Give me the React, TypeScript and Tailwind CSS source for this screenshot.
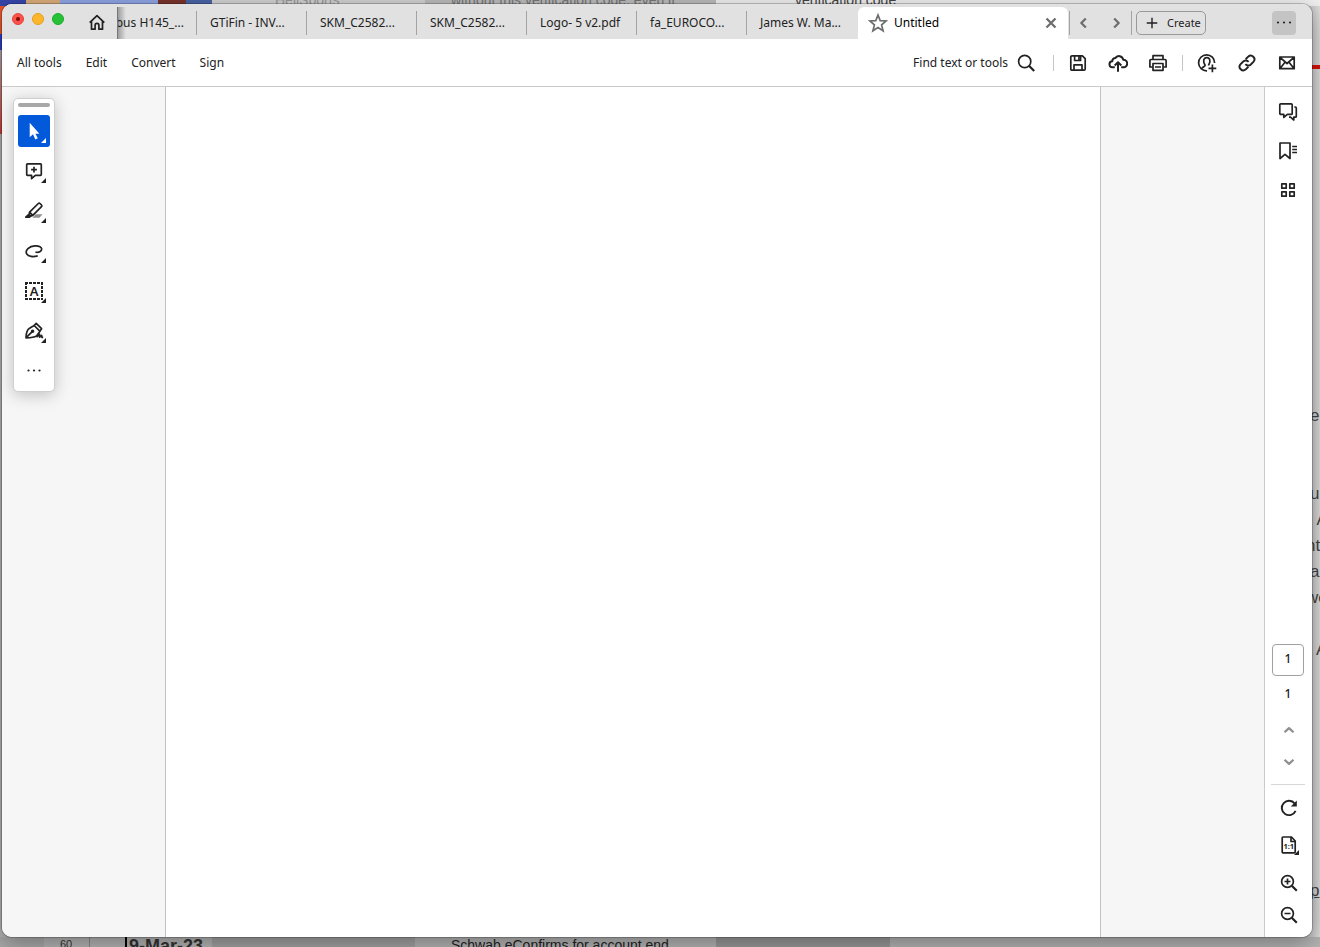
import type { ReactNode } from "react";

interface IconProps {
  children: ReactNode;
  size?: string;
}

function Icon({ children, size = "w-5 h-5" }: IconProps) {
  return (
    <svg
      className={`${size} shrink-0`}
      viewBox="0 0 20 20"
      fill="none"
      stroke="currentColor"
      strokeWidth="1.7"
      strokeLinejoin="round"
      aria-hidden="true"
    >
      {children}
    </svg>
  );
}

interface IconButtonProps {
  label: string;
  className?: string;
  children: ReactNode;
}

function IconButton({ label, className = "", children }: IconButtonProps) {
  return (
    <button
      type="button"
      aria-label={label}
      className={`flex items-center justify-center shrink-0 ${className}`}
    >
      {children}
    </button>
  );
}

const tabs = [
  "GTiFin - INV...",
  "SKM_C2582...",
  "SKM_C2582...",
  "Logo- 5 v2.pdf",
  "fa_EUROCO...",
  "James W. Ma...",
];

const menus = ["All tools", "Edit", "Convert", "Sign"];

function Tab({ title }: { title: string }) {
  return (
    <button
      type="button"
      className="w-[110px] h-full shrink-0 flex items-center pl-[13px] text-left whitespace-nowrap"
    >
      {title}
    </button>
  );
}

function Divider() {
  return <div className="w-px h-6 shrink-0 bg-[#a3a3a3]" />;
}

function TitleBar() {
  return (
    <header className="h-[35px] shrink-0 flex bg-[#e1e1e1] pt-[3px] text-[#222]">
      <div className="w-[115px] shrink-0 flex items-center">
        <div className="flex gap-2 pl-[10px] pb-2">
          <button
            type="button"
            aria-label="Close window"
            className="w-3 h-3 rounded-full bg-[#fe5149] border border-[#e0443e] flex items-center justify-center"
          >
            <span className="w-1 h-1 rounded-full bg-[#7a0b07]" />
          </button>
          <button
            type="button"
            aria-label="Minimize window"
            className="w-3 h-3 rounded-full bg-[#fdb52a] border border-[#e0a020]"
          />
          <button
            type="button"
            aria-label="Zoom window"
            className="w-3 h-3 rounded-full bg-[#27c138] border border-[#1dab2c]"
          />
        </div>

        <IconButton label="Home" className="ml-[19px] w-7 h-7">
          <Icon>
            <path d="M2.7 9.7 10 2.7l7.3 7M4.5 8.500v7.700h3.600v-4a1.900 1.900 0 0 1 3.800 0v4h3.600V8.500" />
          </Icon>
        </IconButton>
      </div>

      <div className="flex w-20 shrink-0 justify-end overflow-hidden relative border-l border-[#777]">
        <Tab title="Airbus H145_..." />
        <div className="absolute inset-y-0 left-0 w-2 bg-gradient-to-r from-black/30 to-transparent" />
      </div>

      {tabs.map((title, index) => (
        <div key={index} className="flex items-center shrink-0 -ml-px">
          <Divider />
          <Tab title={title} />
        </div>
      ))}

      <div className="w-[210px] ml-px shrink-0 flex items-center rounded-t-md bg-white text-black">
        <IconButton label="Star this file" className="ml-[10px] text-[#6e6e6e]">
          <Icon>
            <path
              d="m10 2 2.2 5.6 6 .4-4.6 3.9 1.5 5.9-5.1-3.3-5.1 3.3 1.5-5.9L1.8 8l6-.4z"
              strokeLinejoin="miter"
              strokeWidth="1.7"
            />
          </Icon>
        </IconButton>
        <span className="ml-[6px]">Untitled</span>
        <IconButton label="Close tab" className="ml-auto mr-2 text-[#6e6e6e]">
          <Icon size="w-[18px] h-[18px]">
            <path d="m5 5 10 10M15 5 5 15" strokeWidth="2.6" />
          </Icon>
        </IconButton>
      </div>

      <div className="flex items-center shrink-0 pl-px">
        <Divider />
        <IconButton label="Previous tab" className="w-7 h-7 text-[#6e6e6e]">
          <Icon size="w-[18px] h-[18px]">
            <path d="m12 5-5 5 5 5" strokeWidth="2.6" />
          </Icon>
        </IconButton>
        <IconButton label="Next tab" className="w-7 h-7 ml-1 text-[#6e6e6e]">
          <Icon size="w-[18px] h-[18px]">
            <path d="m8 5 5 5-5 5" strokeWidth="2.6" />
          </Icon>
        </IconButton>
        <div className="ml-px">
          <Divider />
        </div>
        <button
          type="button"
          className="ml-1 h-6 w-[70px] rounded-[5px] border border-[#999] flex items-center gap-2 pl-2 text-[11px]"
        >
          <Icon size="w-[14px] h-[14px]">
            <path d="M10 2.5v15M2.5 10h15" strokeWidth="2" />
          </Icon>
          Create
        </button>
      </div>

      <IconButton
        label="More options"
        className="ml-auto mr-4 mt-1 w-6 h-6 rounded-[4px] bg-[#c4c4c4]"
      >
        <Icon>
          <g fill="currentColor" stroke="none">
            <circle cx="4" cy="9.5" r="1.1" />
            <circle cx="10" cy="9.5" r="1.1" />
            <circle cx="16" cy="9.5" r="1.1" />
          </g>
        </Icon>
      </IconButton>
    </header>
  );
}

function Toolbar() {
  return (
    <nav className="h-12 shrink-0 flex items-center justify-between border-b border-[#cacaca] bg-white text-[#222]">
      <div className="flex gap-6 pl-[15px] pt-px">
        {menus.map((menu) => (
          <button key={menu} type="button">
            {menu}
          </button>
        ))}
      </div>

      <div className="flex items-center pr-[5px]">
        <button type="button" className="flex items-center gap-2 pr-[17px]">
          Find text or tools
          <Icon>
            <circle cx="8.7" cy="8.5" r="6.1" />
            <path d="m13.2 13 5 5" strokeWidth="2.2" />
          </Icon>
        </button>

        <div className="w-px h-4 mr-1 bg-[#c4c4c4]" />

        <IconButton label="Save" className="w-10 h-10">
          <Icon>
            <path d="M2.8 4c0-.7.5-1.2 1.2-1.2h10.4l2.8 2.8V16c0 .7-.5 1.2-1.2 1.2H4c-.7 0-1.2-.5-1.2-1.2zM6.6 3v4.5h6V3M6 17v-5.2h8V17" />
            <path d="M11 3v4.2" />
          </Icon>
        </IconButton>
        <IconButton label="Upload to cloud" className="w-10 h-10">
          <Icon>
            <path d="M6.8 14.3H4.7a3 3 0 0 1-.4-6 3 3 0 0 1 3-3.2 4.3 4.3 0 0 1 7.9 1.6 3.8 3.8 0 0 1 .4 7.6h-2.4" strokeWidth="2" />
            <path d="M10 18.8V9.5M6.7 12.5 10 9.2l3.3 3.3" strokeWidth="2" />
          </Icon>
        </IconButton>
        <IconButton label="Print" className="w-10 h-10">
          <Icon>
            <path d="M5 6.5V2.7h10v3.8M4.7 14H1.9V7.6c0-.7.4-1.1 1.1-1.1h14c.7 0 1.1.4 1.1 1.1V14h-2.8" />
            <path d="M5 10.500h10v6.800H5zM7 14h6" />
          </Icon>
        </IconButton>

        <div className="w-px h-4 mx-1 bg-[#c4c4c4]" />

        <IconButton label="Share with people" className="w-10 h-10">
          <Icon>
            <path d="M17.6 10A8 8 0 1 0 10 17.8" />
            <path d="M5 15.500c.4-1.800 3.100-1.800 3.100-3.200 0-1-1.400-1.500-1.400-4 0-2.200 1.200-3.700 3.100-3.700s3.100 1.500 3.100 3.700c0 2.200-1.300 2.800-1.300 4.200" />
            <path d="M15.4 11.5v7.8M11.5 15.4h7.8" />
          </Icon>
        </IconButton>
        <IconButton label="Copy link" className="w-10 h-10">
          <Icon>
            <g transform="translate(.4 .4) scale(.8)" strokeWidth="2.400">
              <path d="M10 13.500a4.600 4.600 0 0 0 7 .1l3-3a4.600 4.600 0 0 0-6.500-6.500l-3.200 3.200" />
              <path d="M14 10.500a4.600 4.600 0 0 0-7-.1l-3 3a4.600 4.600 0 0 0 6.500 6.500l3.200-3.200" />
            </g>
          </Icon>
        </IconButton>
        <IconButton label="Send by email" className="w-10 h-10">
          <Icon>
            <path d="M2.8 4h14.4v11.7H2.8zM3 4.3l7 6.2 7-6.2M3 15.5l4.8-6M17 15.5l-4.8-6" />
          </Icon>
        </IconButton>
      </div>
    </nav>
  );
}

const tools = [
  {
    label: "Add a comment",
    icon: (
      <>
        <path d="M3.5 2.8h13c.5 0 .8.3.8.8v10c0 .5-.3.8-.8.8h-5.2L7.6 17.7v-3.3H3.5c-.5 0-.8-.3-.8-.8v-10c0-.5.3-.8.8-.8z" />
        <path d="M10 5.7v5.8M7.1 8.6h5.8" />
      </>
    ),
  },
  {
    label: "Highlight",
    icon: (
      <>
        <path d="m8.500 16.800 3.200-3.600h6.800l-3 3.600z" fill="#909090" stroke="none" />
        <path d="m5.600 11.200 8.700-8.700c.5-.5 1.200-.5 1.700 0l1.500 1.500c.5.5.5 1.200 0 1.700l-8.700 8.700z" />
        <path d="m5.600 11.200-.5 2.300 1.400 1.400 2.300-.5" />
        <path d="M4.300 13.800 1.800 16.200h3.700l1.300-1z" fill="currentColor" />
      </>
    ),
  },
  {
    label: "Draw",
    icon: (
      <path d="M13.700 14.900c-4.500 1.300-9.500.8-11-2C.7 9.200 5.200 5.100 11 4.800c4.400-.2 6.700 1.400 6.700 3.300 0 2.300-2.800 3.800-6.300 2.900" />
    ),
  },
  {
    label: "Add text",
    icon: (
      <>
        <path d="M1 2h18M1 18h18" strokeWidth="2" strokeDasharray="3 1" />
        <path d="M2 1v18M18 1v18" strokeWidth="2" strokeDasharray="3 1" />
        <text
          x="10"
          y="14.500"
          textAnchor="middle"
          fontSize="13"
          fontWeight="600"
          fill="currentColor"
          stroke="none"
        >
          A
        </text>
      </>
    ),
  },
  {
    label: "Fill and sign",
    icon: (
      <>
        <path d="M2 16.800c.1-4.300.8-7.200 3-9.100 1.700-1.400 3.400-2.100 5.200-3.200l5.600 5.700c-1 1.700-1.700 3.400-3.300 4.700-2.200 1.600-5.700 1.900-10.500 1.900zM2.400 16.400l5.800-5.800" />
        <path d="m10.200 4.500 2-2.200 5.400 5.400-1.800 2.500M12.500 16.200l3-3 .1 3 2-1.800.3 2h1.300" />
        <circle cx="8.600" cy="10.200" r=".9" fill="currentColor" />
      </>
    ),
  },
];

function ToolBox() {
  return (
    <aside className="w-[42px] flex flex-col items-center rounded-[5px] border border-[#cfcfcf] bg-white pt-1 pb-1 text-[#222] shadow-[0_3px_16px_rgba(0,0,0,0.22)]">
      <div className="w-8 h-1 rounded-full bg-[#a8a8a8]" />

      <button
        type="button"
        aria-label="Select"
        className="mt-2 w-8 h-8 rounded-[3px] bg-[#0259d9] text-white"
      >
        <svg className="w-8 h-8" viewBox="0 0 32 32" fill="currentColor" aria-hidden="true">
          <path d="M11.700 7.800v14.400l3.300-2.900 2.300 5.200 2.500-1.200-2.400-4.600h4z" />
          <path d="M28 23v5h-5z" />
        </svg>
      </button>

      {tools.map((tool) => (
        <button
          key={tool.label}
          type="button"
          aria-label={tool.label}
          className="mt-2 w-8 h-8"
        >
          <svg
            className="w-8 h-8"
            viewBox="0 0 32 32"
            fill="none"
            stroke="currentColor"
            strokeWidth="1.7"
            strokeLinejoin="round"
            aria-hidden="true"
          >
            <g transform="translate(6 6)">{tool.icon}</g>
            <path d="M28.5 21.5v7h-7z" fill="#fff" stroke="none" />
            <path d="M28 23v5h-5z" fill="currentColor" stroke="none" />
          </svg>
        </button>
      ))}

      <IconButton label="More tools" className="mt-2 w-8 h-8">
        <Icon>
          <g fill="currentColor" stroke="none">
            <circle cx="4.5" cy="9.500" r="1.1" />
            <circle cx="10" cy="9.500" r="1.1" />
            <circle cx="15.5" cy="9.500" r="1.1" />
          </g>
        </Icon>
      </IconButton>
    </aside>
  );
}

function SideRail() {
  return (
    <aside className="w-12 shrink-0 flex flex-col justify-between items-center border-l border-[#cacaca] bg-white pt-[5px] pb-[5px] pr-px text-[#222]">
      <div className="flex flex-col">
        <IconButton label="Comments" className="w-8 h-[39px]">
          <Icon>
            <path d="M2.8 1.8h10.4c.6 0 1 .4 1 1v8.6c0 .6-.4 1-1 1H9.4l-3.6 3v-3h-3c-.6 0-1-.4-1-1V2.8c0-.6.4-1 1-1z" />
            <path d="M16.3 5h1c.6 0 1 .4 1 1v8.2c0 .6-.4 1-1 1h-1.500v2.800l-3.300-2.800H11" />
          </Icon>
        </IconButton>
        <IconButton label="Bookmarks" className="w-8 h-[39px]">
          <Icon>
            <path d="M2 2h10v15.500l-5-4.200-5 4.200z" />
            <path d="M14.200 5.500H19M14.200 8.500H19M14.200 11.500H19" strokeWidth="1.500" />
          </Icon>
        </IconButton>
        <IconButton label="Page thumbnails" className="w-8 h-[39px]">
          <Icon>
            <path d="M3.800 3.800h4.400v4.400H3.800zM11.800 3.800h4.400v4.400h-4.400zM3.800 11.800h4.400v4.400H3.800zM11.800 11.800h4.400v4.400h-4.400z" />
          </Icon>
        </IconButton>
      </div>

      <div className="flex flex-col items-center">
        <input
          type="text"
          aria-label="Current page"
          defaultValue="1"
          className="w-8 h-8 rounded-[4px] border border-[#a0a0a0] text-center pb-1 font-medium"
        />
        <span className="h-9 flex items-center font-medium">1</span>

        <IconButton label="Previous page" className="mt-[2px] w-8 h-8 pl-[2px] text-[#909090]">
          <Icon size="w-[18px] h-[18px]">
            <path d="m5 12.500 5-4.500 5 4.500" strokeWidth="2.600" />
          </Icon>
        </IconButton>
        <IconButton label="Next page" className="w-8 h-8 pl-[2px] text-[#909090]">
          <Icon size="w-[18px] h-[18px]">
            <path d="m5 7.500 5 4.500 5-4.500" strokeWidth="2.600" />
          </Icon>
        </IconButton>

        <div className="mt-[6px] mb-1 h-px w-[34px] bg-[#d8d8d8]" />

        <IconButton label="Rotate" className="w-8 h-[38px] pl-[2px]">
          <Icon>
            <path d="M16.600 12.800a7.200 7.200 0 1 1-.9-7.300" strokeWidth="1.900" />
            <path d="M17.800 2.500v6h-6z" fill="currentColor" stroke="none" />
          </Icon>
        </IconButton>
        <IconButton label="Actual size" className="w-8 h-9 pl-[2px]">
          <Icon>
            <path d="M4 2h8.500L16.200 6v11c0 .5-.3.800-.8.800H4c-.5 0-.8-.3-.8-.8V2.800C3.200 2.300 3.500 2 4 2z" />
            <path d="M12 2v4.500h4.200" />
            <text
              x="9.800"
              y="14.300"
              textAnchor="middle"
              fontSize="7.500"
              fontWeight="700"
              fill="currentColor"
              stroke="none"
            >
              1:1
            </text>
            <path d="M20 15v5h-5z" fill="currentColor" stroke="none" />
          </Icon>
        </IconButton>
        <IconButton label="Zoom in" className="mt-1 w-8 h-8 pl-[2px]">
          <Icon>
            <circle cx="8.500" cy="8.500" r="5.900" />
            <path d="M8.500 5.500v6M5.500 8.500h6" />
            <path d="m12.800 12.800 5 5" strokeWidth="2.200" />
          </Icon>
        </IconButton>
        <IconButton label="Zoom out" className="w-8 h-8 mb-px pl-[2px]">
          <Icon>
            <circle cx="8.500" cy="8.500" r="5.900" />
            <path d="M5.500 8.500h6" />
            <path d="m12.800 12.800 5 5" strokeWidth="2.200" />
          </Icon>
        </IconButton>
      </div>
    </aside>
  );
}

// Slivers of the other windows that stay visible around the main one
function Desktop() {
  return (
    <div
      className="col-start-1 row-start-1 min-w-0 flex flex-col justify-between overflow-hidden bg-[#c9c9c9] font-['Liberation_Sans',sans-serif] text-[#444]"
      aria-hidden="true"
    >
      <div className="h-[6px] flex items-end overflow-hidden whitespace-nowrap text-sm leading-3">
        <div className="w-[26px] h-full shrink-0 bg-[#3846ad]" />
        <div className="w-[34px] h-full shrink-0 bg-[#dcae7c]" />
        <div className="w-[98px] h-full shrink-0 bg-[#8fa5e6]" />
        <div className="w-7 h-full shrink-0 bg-[#7b352e]" />
        <div className="w-[26px] h-full shrink-0 bg-[#4a65a8]" />
        <div className="w-[213px] shrink-0 bg-[#d2d2d2] pl-[63px] text-[#999]">HeliSports</div>
        <div className="w-[291px] shrink-0 bg-[#bcbcbc] pl-[26px] text-[#777]">
          without this verification code, even if
        </div>
        <div className="flex-1 bg-[#f0f0f0] pl-[79px]">verification code</div>
      </div>

      <div className="flex-1 flex justify-between">
        <div className="w-3 flex flex-col">
          <div className="h-7 bg-[#e8572d]" />
          <div className="h-4 bg-[#3040c8]" />
          <div className="h-[84px] bg-gradient-to-b from-[#a9a3ad] to-[#c93a35]" />
          <div className="flex-1 bg-[#b2b2b2]" />
        </div>
        <div className="w-4 flex flex-col bg-gradient-to-r from-[#b5b5b5] to-[#dedede]">
          <div className="mt-[59px] h-1 bg-[#d91209]" />
          <div className="mt-[334px] pl-[6px] text-[17px] leading-[26px] whitespace-nowrap">
            <p>e</p>
            <p className="mt-[52px]">u</p>
            <p className="-ml-[2px]">, A</p>
            <p className="-ml-1">nt</p>
            <p>a</p>
            <p className="-ml-1">we</p>
            <p className="mt-[26px] pl-[6px]">A</p>
            <p className="mt-[215px] underline">p</p>
          </div>
        </div>
      </div>

      <div className="h-[10px] flex items-start overflow-hidden whitespace-nowrap bg-[#b4b4b4] text-[#333]">
        <div className="w-11 h-full shrink-0 bg-[#a9a9a9]" />
        <div className="w-[46px] shrink-0 border-r border-[#888] pl-4 text-[11px] leading-[14px]">60</div>
        <div className="w-[35px] shrink-0" />
        <div className="w-[87px] shrink-0 border-l-2 border-black pl-[2px] text-[18px] leading-[18px] font-bold">
          9-Mar-23
        </div>
        <div className="w-[203px] h-full shrink-0 bg-[#a2a2a2]" />
        <div className="w-[301px] shrink-0 pl-9 text-sm leading-4 text-[#222]">
          Schwab eConfirms for account end
        </div>
        <div className="w-[174px] h-full shrink-0 bg-[#989898]" />
      </div>
    </div>
  );
}

export default function App() {
  return (
    <div className="grid grid-cols-1 grid-rows-1 h-screen w-full overflow-hidden font-['Noto_Sans','Open_Sans',sans-serif] text-[12px] leading-4 text-[#222]">
      <Desktop />

      <div className="col-start-1 row-start-1 z-10 min-w-0 pt-1 pl-[2px] pr-2 pb-[10px] flex">
        <div className="flex-1 min-w-0 flex flex-col overflow-hidden rounded-[10px] bg-white shadow-[0_0_0_1px_rgba(0,0,0,0.2),0_6px_24px_rgba(0,0,0,0.35)]">
          <TitleBar />
          <Toolbar />

          <div className="flex-1 min-h-0 flex">
            <div className="w-[164px] shrink-0 border-r border-[#c2c2c2] bg-[#f6f6f6] pl-[11px] pt-[11px]">
              <ToolBox />
            </div>
            <main className="flex-1 min-w-0 bg-white" aria-label="Document page" />
            <div className="w-[164px] shrink-0 border-l border-[#c2c2c2] bg-[#f6f6f6]" />
            <SideRail />
          </div>
        </div>
      </div>
    </div>
  );
}
